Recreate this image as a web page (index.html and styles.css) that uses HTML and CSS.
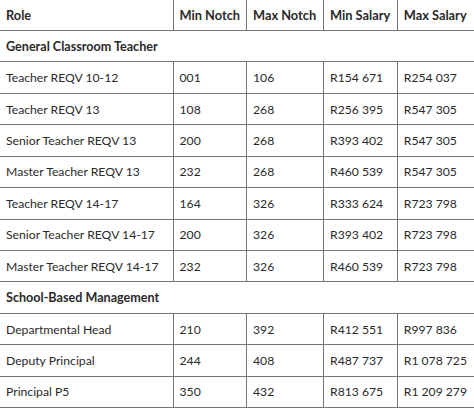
FILE: index.html
```html
<!DOCTYPE html>
<html lang="en">
<head>
<meta charset="utf-8">
<title>Educator salaries</title>
<link rel="stylesheet" href="styles.css">
</head>
<body>
<table class="pay">
  <thead>
    <tr><th class="c-role">Role</th><th class="c-n1">Min Notch</th><th class="c-n2">Max Notch</th><th class="c-s1">Min Salary</th><th class="c-s2">Max Salary</th></tr>
  </thead>
  <tbody>
    <tr class="section"><td colspan="5">General Classroom Teacher</td></tr>
    <tr><td>Teacher REQV 10-12</td><td>001</td><td>106</td><td>R154&#8239;671</td><td>R254&#8239;037</td></tr>
    <tr><td>Teacher REQV 13</td><td>108</td><td>268</td><td>R256&#8239;395</td><td>R547&#8239;305</td></tr>
    <tr><td>Senior Teacher REQV 13</td><td>200</td><td>268</td><td>R393&#8239;402</td><td>R547&#8239;305</td></tr>
    <tr><td>Master Teacher REQV 13</td><td>232</td><td>268</td><td>R460&#8239;539</td><td>R547&#8239;305</td></tr>
    <tr><td>Teacher REQV 14-17</td><td>164</td><td>326</td><td>R333&#8239;624</td><td>R723&#8239;798</td></tr>
    <tr><td>Senior Teacher REQV 14-17</td><td>200</td><td>326</td><td>R393&#8239;402</td><td>R723&#8239;798</td></tr>
    <tr><td>Master Teacher REQV 14-17</td><td>232</td><td>326</td><td>R460&#8239;539</td><td>R723&#8239;798</td></tr>
    <tr class="section"><td colspan="5">School-Based Management</td></tr>
    <tr><td>Departmental Head</td><td>210</td><td>392</td><td>R412&#8239;551</td><td>R997&#8239;836</td></tr>
    <tr><td>Deputy Principal</td><td>244</td><td>408</td><td>R487&#8239;737</td><td>R1&#8239;078&#8239;725</td></tr>
    <tr><td>Principal P5</td><td>350</td><td>432</td><td>R813&#8239;675</td><td>R1&#8239;209&#8239;279</td></tr>
  </tbody>
</table>
</body>
</html>
```
FILE: styles.css
```css
html, body {
  margin: 0;
  padding: 0;
  background: #ffffff;
  overflow: hidden;
}
.pay {
  border-collapse: collapse;
  table-layout: fixed;
  width: 476px;
  margin: -1.5px 0 0 -1px;
  font-family: Lato, "Open Sans", sans-serif;
  font-size: 12.2px;
  color: #2a2a2a;
}
.pay th,
.pay td {
  border: 1px solid #757575;
  height: 31.45px;
  padding: 0 4px 0 6px;
  text-align: left;
  vertical-align: middle;
  white-space: nowrap;
  box-sizing: border-box;
}
.pay th.c-role { width: 173.5px; }
.pay th.c-n1 { width: 73.5px; }
.pay th.c-n2 { width: 77px; }
.pay th.c-s1 { width: 73.8px; }
.pay th.c-s2 { width: 78.2px; }
.pay th {
  font-weight: 700;
  font-size: 12.8px;
}
.pay .section td {
  font-weight: 700;
  font-size: 12.6px;
}
```
